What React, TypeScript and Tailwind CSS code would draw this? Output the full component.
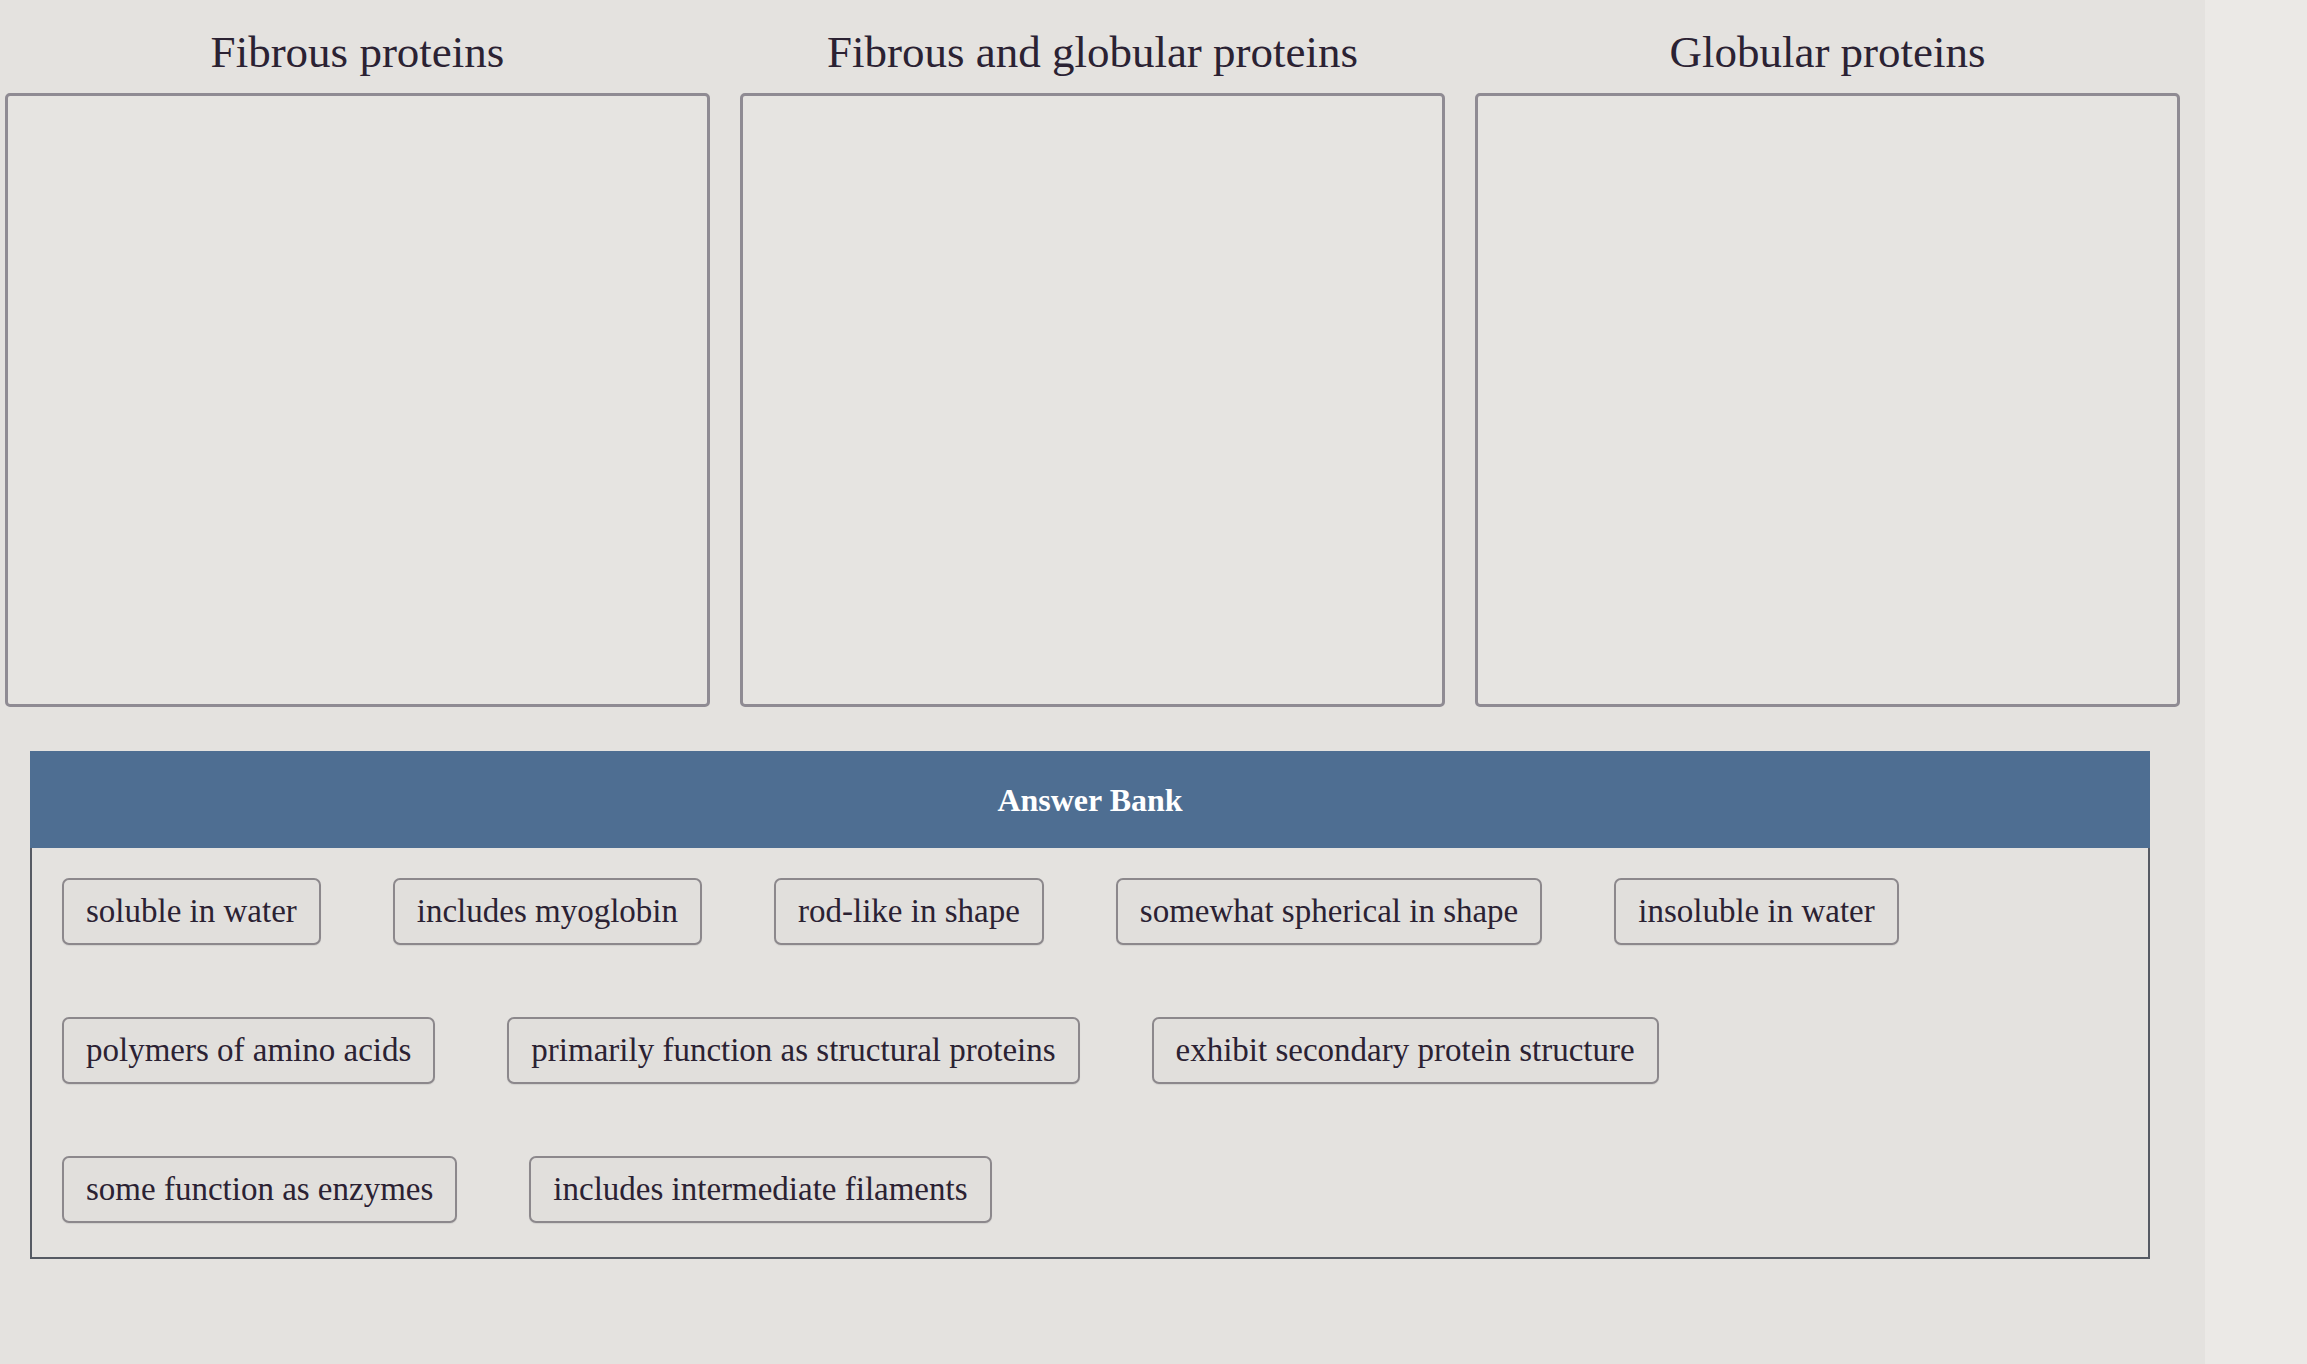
const columns = ["Fibrous proteins", "Fibrous and globular proteins", "Globular proteins"];

const rows = [
  ["soluble in water", "includes myoglobin", "rod-like in shape", "somewhat spherical in shape", "insoluble in water"],
  ["polymers of amino acids", "primarily function as structural proteins", "exhibit secondary protein structure"],
  ["some function as enzymes", "includes intermediate filaments"],
];

function Chip({ label }: { label: string }) {
  return (
    <div className="flex h-[67px] items-center rounded-[7px] border-2 border-[#8c888c] bg-[#e1dfdc] px-[22px] text-[33px] leading-none text-[#2b2233] shadow-[0_1px_1px_rgba(0,0,0,0.08)]">
      {label}
    </div>
  );
}

export default function App() {
  return (
    <div
      className="flex min-h-screen w-full bg-[#e4e2df]"
      style={{ fontFamily: '"Liberation Serif", "Times New Roman", serif' }}
    >
      <div className="w-[2205px] pl-[5px] pt-[20px]">
        <div className="grid grid-cols-[705px_705px_705px] gap-x-[30px]">
          {columns.map((title) => (
            <div key={title} className="flex flex-col">
              <h2 className="flex h-[73px] items-start justify-center pt-[10px] text-[45px] leading-none text-[#2b2233]">
                {title}
              </h2>
              <div className="h-[614px] rounded-[5px] border-[3px] border-[#8f8b93] bg-[#e6e4e1]" />
            </div>
          ))}
        </div>

        <div className="ml-[25px] mt-[44px] w-[2120px]">
          <div className="flex h-[97px] items-center justify-center bg-[#4e6e92] text-[32px] font-bold text-white">
            Answer Bank
          </div>
          <div className="flex flex-col gap-[72px] border-x-2 border-b-2 border-[#555a63] px-[30px] pb-[34px] pt-[30px]">
            {rows.map((row, i) => (
              <div key={i} className="flex gap-x-[72px]">
                {row.map((label) => (
                  <Chip key={label} label={label} />
                ))}
              </div>
            ))}
          </div>
        </div>
      </div>
      <div className="flex-1 bg-[#ebe9e6]" />
    </div>
  );
}
